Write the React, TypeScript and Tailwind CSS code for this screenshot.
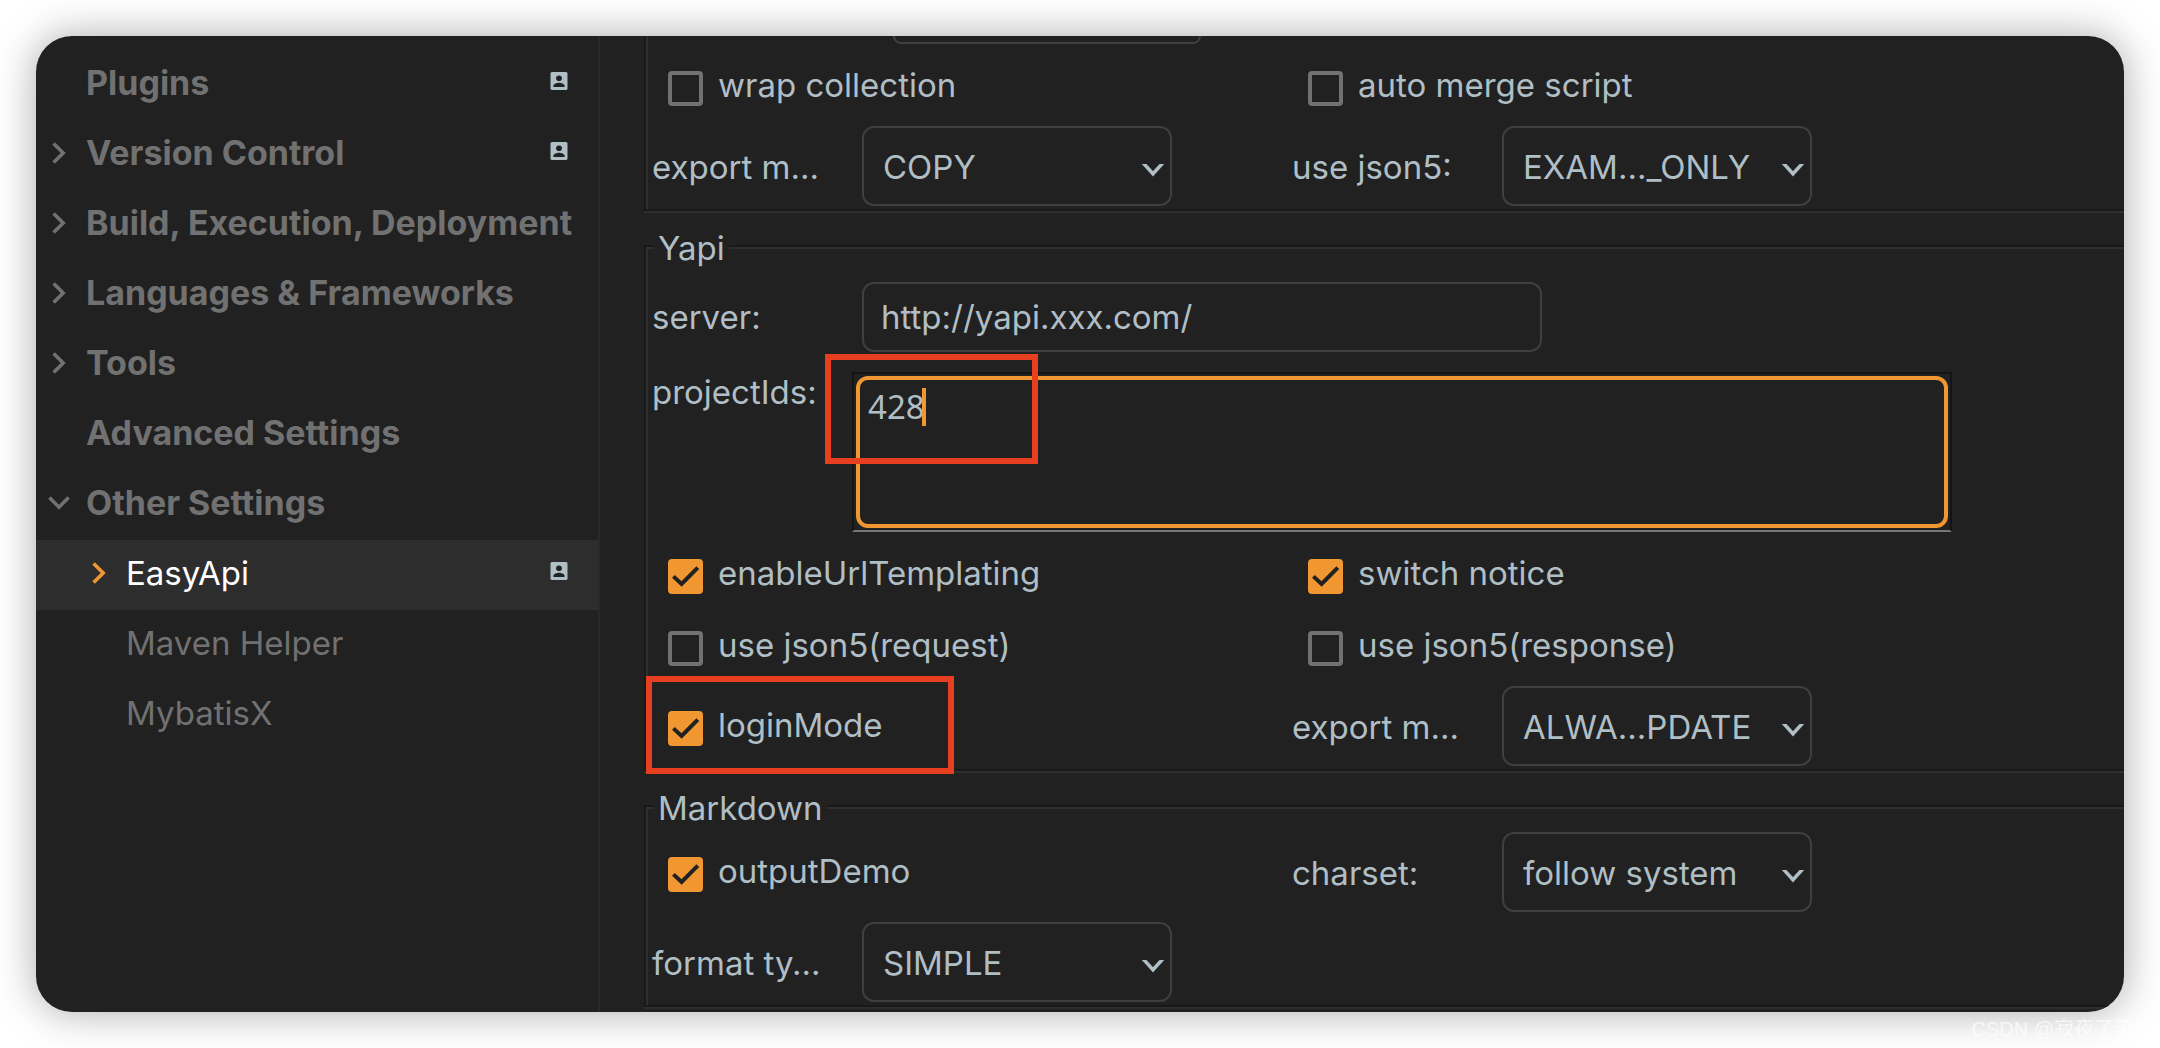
import React from "react";

type TreeItem = {
  name: string;
  arrow?: "right" | "down";
  child?: boolean;
  active?: boolean;
  project?: boolean;
};

const treeItems: TreeItem[] = [
  { name: "Plugins", project: true },
  { name: "Version Control", arrow: "right", project: true },
  { name: "Build, Execution, Deployment", arrow: "right" },
  { name: "Languages & Frameworks", arrow: "right" },
  { name: "Tools", arrow: "right" },
  { name: "Advanced Settings" },
  { name: "Other Settings", arrow: "down" },
  { name: "EasyApi", arrow: "right", child: true, active: true, project: true },
  { name: "Maven Helper", child: true },
  { name: "MybatisX", child: true },
];

const ArrowRight = () => (
  <svg width="14" height="22" viewBox="0 0 14 22" fill="none" stroke="currentColor" strokeWidth="3.6">
    <path d="M1.6 1.4L11.2 11L1.6 20.6" />
  </svg>
);

const ArrowDown = () => (
  <svg width="22" height="14" viewBox="0 0 22 14" fill="none" stroke="currentColor" strokeWidth="3.6">
    <path d="M1.4 1.6L11 11.2L20.6 1.6" />
  </svg>
);

// badge for settings that belong to the current project
const ProjectBadge = () => (
  <svg className="mb-1 ml-auto shrink-0" width="18" height="18" viewBox="0 0 18 18">
    <rect x="0.5" width="17" height="18" rx="1.6" fill="#b0bec5" />
    <ellipse cx="9" cy="6.2" rx="2.9" ry="2.8" fill="#212121" />
    <path d="M3.4 15v-1.2c0-2 3.6-3 5.6-3s5.6 1 5.6 3V15z" fill="#212121" />
  </svg>
);

const TreeRow = ({ item }: { item: TreeItem }) => (
  <a
    href="#"
    className={`flex h-[70px] items-center gap-4 whitespace-nowrap pr-[30px] pb-1 ${
      item.child ? "pl-[52px]" : "pl-3 text-[34px] font-bold"
    } ${item.active ? "bg-[#2d2d2d] text-white" : "text-[#717171]"}`}
  >
    <span className={`flex w-[22px] shrink-0 justify-center ${item.active ? "text-[#f09732]" : ""}`}>
      {item.arrow === "right" && <ArrowRight />}
      {item.arrow === "down" && <ArrowDown />}
    </span>
    {item.name}
    {item.project && <ProjectBadge />}
  </a>
);

const Check = ({ id, label, checked = false }: { id: string; label: string; checked?: boolean }) => (
  <div className="flex items-center gap-[15px] pl-4">
    <span className="relative h-[35px] w-[35px] shrink-0">
      <input
        id={id}
        type="checkbox"
        defaultChecked={checked}
        className="peer block h-full w-full appearance-none rounded-[4px] border-4 border-[#717171] checked:border-[#f09732] checked:bg-[#f09732]"
      />
      <svg
        className="pointer-events-none absolute inset-0 hidden peer-checked:block"
        viewBox="0 0 35 35"
        fill="none"
        stroke="#212121"
        strokeWidth="4"
      >
        <path d="M5.4 17.4L13.6 25L29.8 8.6" />
      </svg>
    </span>
    <label htmlFor={id} className="pb-1.5">
      {label}
    </label>
  </div>
);

const Select = ({ id, label, value }: { id: string; label: string; value: string }) => (
  <div className="flex items-center">
    <label htmlFor={id} className="w-[210px] shrink-0 pt-0.5">
      {label}
    </label>
    <div className="relative w-[310px]">
      <select
        id={id}
        defaultValue={value}
        className="block h-20 w-full appearance-none rounded-xl border-2 border-[#3f3f3f] bg-[#212121] pt-0.5 pl-[19px]"
      >
        <option>{value}</option>
      </select>
      <svg
        className="pointer-events-none absolute top-[38px] right-2"
        width="22"
        height="13"
        viewBox="0 0 22 13"
        fill="none"
        stroke="currentColor"
        strokeWidth="3.5"
      >
        <path d="M1 -1.2L11 9.8L21 -1.2" />
      </svg>
    </div>
  </div>
);

const Group = ({ title, children }: { title: string; children: React.ReactNode }) => (
  <fieldset className="mt-[15px] border-2 border-r-0 border-[#191919] pb-px pl-1.5 shadow-[inset_2px_2px_0_#2e2e2e,0_2px_0_#2e2e2e]">
    <legend className="ml-0.5 bg-[#212121] pt-1 pr-1 pl-1 leading-9">{title}</legend>
    {children}
  </fieldset>
);

const Sidebar = () => (
  <nav className="w-[564px] shrink-0 border-r-2 border-[#292929] pt-3.5">
    {treeItems.map((item) => (
      <TreeRow key={item.name} item={item} />
    ))}
  </nav>
);

const App = () => {
  return (
    <div className="relative bg-white p-9 font-['Inter',sans-serif] text-[33px] leading-10">
      <div className="flex overflow-hidden rounded-[36px] bg-[#212121] shadow-[0_0_40px_rgba(0,0,0,0.34)]">
        <Sidebar />
        <main className="min-w-0 flex-1 pb-[5px] pl-11 text-[#b0bec5]">
          <section className="border-b-2 border-l-2 border-[#191919] pb-px pl-1.5 shadow-[inset_2px_0_0_#2e2e2e,0_2px_0_#2e2e2e]">
            {/* bottom edge of the field scrolled out of view */}
            <div className="mb-2 ml-[241px] h-2 w-[308px] rounded-b-xl border-2 border-t-0 border-[#3f3f3f]" />
            <div className="grid grid-cols-[10fr_13fr] grid-rows-[72px_84px] items-center">
              <Check id="wrap" label="wrap collection" />
              <Check id="merge" label="auto merge script" />
              <Select id="postman-mode" label="export m..." value="COPY" />
              <Select id="json5" label="use json5:" value="EXAM..._ONLY" />
            </div>
          </section>

          <Group title="Yapi">
            <div className="flex items-center pt-4">
              <label htmlFor="server" className="w-[210px] shrink-0">
                server:
              </label>
              <input
                id="server"
                type="text"
                defaultValue="http://yapi.xxx.com/"
                className="h-[70px] w-full max-w-[680px] rounded-xl border-2 border-[#3f3f3f] bg-transparent pl-[17px]"
              />
            </div>
            <div className="mt-5 mb-2 flex items-start">
              <label htmlFor="project-ids" className="w-[200px] shrink-0">
                projectIds:
              </label>
              <div className="relative w-full max-w-[1100px] border-2 border-[#141414] border-b-[#777777] p-0.5">
                <textarea
                  id="project-ids"
                  defaultValue="428"
                  className="block h-[152px] w-full resize-none rounded-xl border-4 border-[#f09732] bg-transparent px-2 pt-2 font-['Noto_Sans',sans-serif] leading-[38px] outline-none"
                />
                <span className="absolute top-3.5 left-[68px] h-[38px] w-1 bg-[#f09732]" />
                <span className="pointer-events-none absolute -top-5 -left-[29px] h-[110px] w-[213px] border-6 border-[#e83f21]" />
              </div>
            </div>
            <div className="grid grid-cols-[10fr_13fr] grid-rows-[72px_72px_84px] items-center">
              <Check id="url-templating" label="enableUrlTemplating" checked />
              <Check id="notice" label="switch notice" checked />
              <Check id="json5-request" label="use json5(request)" />
              <Check id="json5-response" label="use json5(response)" />
              <div className="relative flex h-full items-center pt-1">
                <Check id="login-mode" label="loginMode" checked />
                <span className="pointer-events-none absolute -top-2 -left-1.5 h-[98px] w-[308px] border-6 border-[#e83f21]" />
              </div>
              <Select id="yapi-mode" label="export m..." value="ALWA...PDATE" />
            </div>
          </Group>

          <Group title="Markdown">
            <div className="grid grid-cols-[10fr_13fr] grid-rows-[84px_84px] items-center gap-y-1.5 pt-1">
              <div className="pt-1">
                <Check id="output-demo" label="outputDemo" checked />
              </div>
              <Select id="charset" label="charset:" value="follow system" />
              <Select id="format" label="format ty..." value="SIMPLE" />
            </div>
          </Group>
        </main>
      </div>
      <p className="absolute right-1.5 bottom-1 font-['Liberation_Sans','Noto_Sans_CJK_SC',sans-serif] text-xl leading-[30px] text-white/70">
        CSDN @寂夜了无痕
      </p>
    </div>
  );
};

export default App;
